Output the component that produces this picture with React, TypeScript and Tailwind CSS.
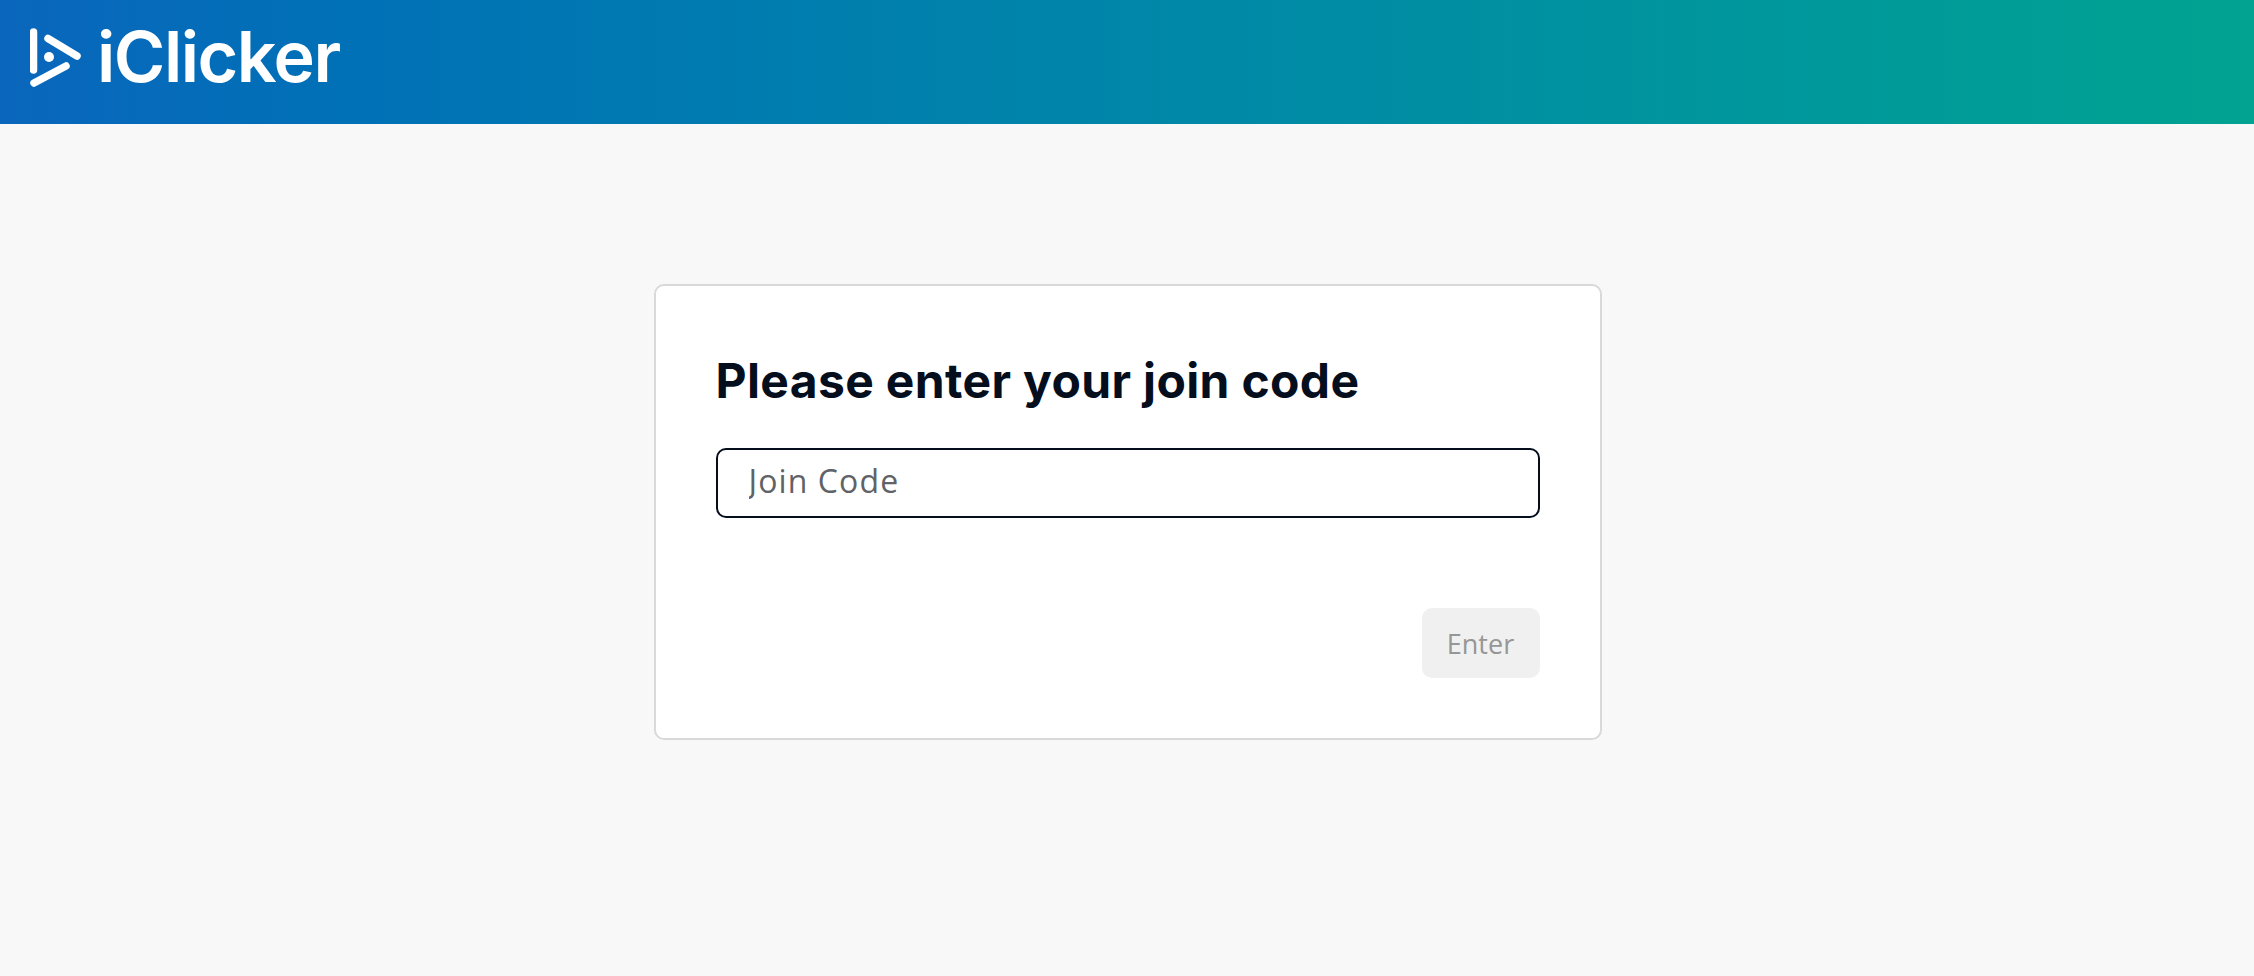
import { useState } from 'react';

function Logo() {
  return (
    <div className="flex items-center">
      <svg width="52" height="60" viewBox="30 28 52 60" fill="none" className="mr-[15px]">
        <g stroke="#fff" strokeWidth="7.5" strokeLinecap="round">
          <path d="M33.5 32V70" />
          <path d="M48 38.5L77 56" />
          <path d="M66 66L34 83" />
        </g>
        <circle cx="49" cy="57" r="5" fill="#fff" />
      </svg>
      <span className="mb-[3px] font-['Inter',sans-serif] text-[70px] leading-none font-semibold tracking-[-1.5px] text-white">iClicker</span>
    </div>
  );
}

export default function App() {
  const [code, setCode] = useState('');

  return (
    <div className="min-h-[976px] bg-[#f8f8f8]">
      <header className="flex h-[124px] items-center bg-gradient-to-r from-[#0a66bc] to-[#02a391] pl-[30px] pb-[8px]">
        <Logo />
      </header>

      <main className="flex justify-center pt-[160px]">
        <div className="ml-[1px] w-[948px] rounded-[10px] border-2 border-[#d9d9d9] bg-white px-[60px] pt-[67px] pb-[60px]">
          <h1 className="font-['Inter',sans-serif] text-[48px] leading-[56px] font-bold tracking-[0.35px] text-[#050e1c]">
            Please enter your join code
          </h1>

          <input
            value={code}
            onChange={(e) => setCode(e.target.value)}
            placeholder="Join Code"
            className="mt-[39px] block h-[70px] w-full rounded-[10px] border-2 border-[#050e1c] bg-white pr-[30px] pb-[5px] pl-[31px] font-['Open_Sans',sans-serif] text-[32px] tracking-[1.1px] text-[#050e1c] outline-none placeholder:text-[#5f6266]"
          />

          <div className="mt-[90px] flex justify-end">
            <button
              disabled={!code.trim()}
              className="h-[70px] w-[118px] rounded-[10px] bg-[#f0f0f0] pt-[2px] font-['Open_Sans',sans-serif] text-[27px] font-medium text-[#969696]"
            >
              Enter
            </button>
          </div>
        </div>
      </main>
    </div>
  );
}
